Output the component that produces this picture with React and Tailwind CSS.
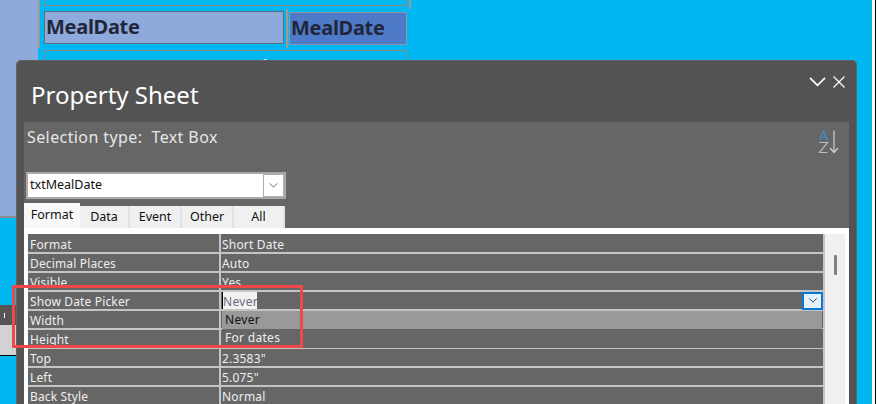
const font = "font-['Noto_Sans','Open_Sans',sans-serif]";

const rows = [
  ["Format", "Short Date"],
  ["Decimal Places", "Auto"],
  ["Visible", "Yes"],
  ["Show Date Picker", ""],
  ["Width", ""],
  ["Height", ""],
  ["Top", '2.3583"'],
  ["Left", '5.075"'],
  ["Back Style", "Normal"],
];

function Chevron({ className }) {
  return (
    <svg viewBox="0 0 10 6" className={className} fill="none" stroke="currentColor" strokeWidth="1">
      <path d="M0.5 0.5 L5 5 L9.5 0.5" />
    </svg>
  );
}

function Tab({ label, width }) {
  return (
    <div className={`${width} flex h-[22px] items-center justify-center border-r-2 border-[#e2e2e2] bg-[#f0f0f0] text-[12.5px] text-[#111]`}>
      {label}
    </div>
  );
}

function PropertyRow({ name, value, index }) {
  return (
    <div className={`flex shrink-0 border-b-2 border-[#c4c4c4] ${index === 0 ? "h-[20px]" : "h-[19px]"}`}>
      <div className="flex w-[193px] items-center border-r-2 border-[#c4c4c4] pl-[2px] pt-[3px] text-[12px] leading-none tracking-[0.15px] text-[#eee]">
        {name}
      </div>
      <div className="flex flex-1 items-center pl-[1px] pt-[3px] text-[12px] leading-none tracking-[0.2px] text-[#eee]">{value}</div>
    </div>
  );
}

function PropertySheet() {
  return (
    <div className="absolute left-[16px] top-[60px] flex h-[344px] w-[841px] flex-col overflow-hidden rounded-t-[5px] border-x border-t border-[#626262] bg-[#535353]">
      <div className="flex h-[61px] shrink-0 items-start justify-between pl-[14px] pr-[11px]">
        <div className="mt-[18px] text-[24px] leading-[32px] text-white">Property Sheet</div>
        <div className="mt-[15px] flex items-center gap-[7px] text-white">
          <Chevron className="h-[10px] w-[17px]" />
          <svg viewBox="0 0 12 12" className="h-[12px] w-[12px]" fill="none" stroke="currentColor" strokeWidth="1.2">
            <path d="M0.5 0.5 L11.5 11.5 M11.5 0.5 L0.5 11.5" />
          </svg>
        </div>
      </div>
      <div className="mx-[7px] flex flex-1 flex-col bg-[#666]">
        <div className="flex h-[50px] shrink-0 items-start justify-between pl-[3px] pr-[9px]">
          <div className="mt-[4px] text-[16px] leading-[22px] tracking-[0.4px] text-[#e6e6e6]">Selection type:&nbsp; Text Box</div>
          <svg viewBox="0 0 22 24" className="mt-[8px] h-[24px] w-[22px]" fill="none" strokeWidth="1.2">
            <path d="M1.5 10.5 L5.5 0.5 L9.5 10.5 M3 7 H8" stroke="#3b8fd6" />
            <path d="M1.5 12.5 H9.5 L1.5 22.5 H9.5" stroke="#bdbdbd" />
            <path d="M16 0.5 V22 M12 18 L16 22.5 L20 18" stroke="#d0d0d0" />
          </svg>
        </div>
        <div className="ml-[2px] flex h-[27px] w-[260px] shrink-0 items-center justify-between border-2 border-[#a8a8a8] bg-white pl-[2px] text-[12.5px] text-[#111]">
          <span>txtMealDate</span>
          <div className="flex h-[23px] w-[21px] items-center justify-center border border-[#adadad] bg-white text-[#555]">
            <Chevron className="h-[5px] w-[9px]" />
          </div>
        </div>
        <div className="mt-[4px] flex h-[25px] shrink-0 items-end">
          <div className="flex h-[25px] w-[56px] items-center justify-center bg-[#f8f8f8] text-[12.5px] text-[#111]">Format</div>
          <Tab label="Data" width="w-[50px]" />
          <Tab label="Event" width="w-[52px]" />
          <Tab label="Other" width="w-[52px]" />
          <Tab label="All" width="w-[51px]" />
        </div>
        <div className="flex min-h-0 flex-1 flex-col bg-white pl-[4px] pr-[4px] pt-[6px]">
          <div className="flex min-h-0 flex-1 bg-[#f0f0f0]">
            <div className="relative flex w-[797px] shrink-0 flex-col overflow-hidden border-r-2 border-[#c4c4c4] bg-[#666]">
              {rows.map(([name, value], index) => (
                <PropertyRow key={name} name={name} value={value} index={index} />
              ))}
              <div className="absolute left-[194px] top-[58px] w-[601px] text-[12px] leading-none tracking-[0.3px]">
                <div className="flex h-[17px] items-center justify-between">
                  <span className="flex h-[17px] w-[35px] items-center border-l border-black bg-[#f2f2f2] pt-[2px] text-[#6a6a80]">Never</span>
                  <div className="flex h-[18px] w-[21px] items-center justify-center border-2 border-[#0a78d7] bg-[#e5f1fb] text-[#222]">
                    <Chevron className="h-[5px] w-[10px]" />
                  </div>
                </div>
                <div className="mt-[2px] mr-[1px] flex h-[18px] items-center bg-[#999] pl-[3px] text-[#111]">Never</div>
                <div className="flex h-[19px] items-center bg-[#666] pb-[2px] pl-[3px] text-[#eee]">For dates</div>
              </div>
            </div>
            <div className="flex flex-1 justify-center pt-[21px]">
              <div className="h-[20px] w-[3px] rounded-[1px] bg-[#808080]" />
            </div>
          </div>
        </div>
      </div>
    </div>
  );
}

function FieldRow() {
  return (
    <div className="flex h-[39px] items-start pt-[2px]">
      <div className="flex h-[33px] w-[240px] items-center border border-[#5b6b80] bg-[#8eaadb] pb-[2px] pl-[1px] text-[20px] font-bold tracking-[-0.3px] text-[#22263a]">
        MealDate
      </div>
      <div className="-mt-[2px] ml-[2px] h-[39px] w-[2px] bg-[#9a9a9a]" />
      <div className="ml-[1px] mt-[1px] flex h-[33px] w-[118px] items-center border border-[#8f97a6] bg-[#4f7ac7] pb-[2px] pl-[1px] text-[20px] font-bold tracking-[-0.3px] text-[#22263a]">
        MealDate
      </div>
    </div>
  );
}

export default function App() {
  return (
    <div className={`relative flex h-[404px] w-[878px] overflow-hidden bg-white ${font}`}>
      <div className="flex w-[38px] shrink-0 flex-col bg-[#00b7f1]">
        <div className="h-[216px] bg-[#8eaadb]" />
        <div className="h-[2px] bg-[#8c8c8c]" />
        <div className="h-[87px]" />
        <div className="flex h-[20px] items-center bg-[#565656] pl-[4px]">
          <div className="h-[5px] w-[1px] bg-white" />
        </div>
        <div className="h-[30px] bg-[#d2d2d2]" />
        <div className="h-[1px] bg-black" />
      </div>
      <div className="flex w-[834px] shrink-0 bg-[#00b7f1]">
        <div className="h-[48px] w-[2px] bg-[#9a9a9a]" />
        <div className="ml-[4px] flex w-[363px] flex-col">
          <div className="h-[6px] border-x border-b border-[#8c8c8c]" />
          <div className="pt-[3px]">
            <FieldRow />
          </div>
          <div className="mt-[2px] h-[40px] border border-[#8c8c8c] pl-[18px] pt-[2px] text-center text-[20px] font-bold leading-[28px] tracking-[-0.3px] text-white">
            Summaries
          </div>
        </div>
        <div className="ml-[2px] h-[9px] w-[2px] bg-[#9a9a9a]" />
      </div>
      <div className="flex flex-1">
        <div className="w-[3px] bg-white" />
        <div className="w-[1px] bg-black" />
      </div>
      <div className="absolute left-[12px] top-[285px] z-10 h-[63px] w-[291px] border-[3px] border-[#f04848]" />
      <PropertySheet />
    </div>
  );
}
